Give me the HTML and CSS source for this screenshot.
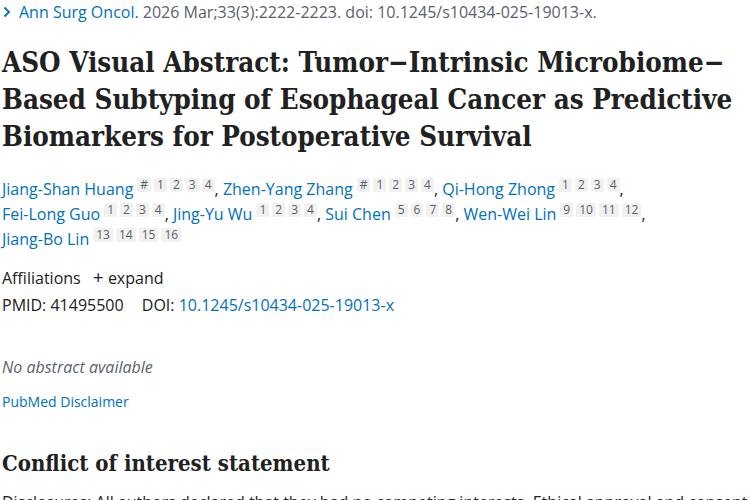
FILE: index.html
```html
<!DOCTYPE html>
<html>
<head>
<meta charset="utf-8">
<link rel="stylesheet" href="styles.css">
</head>
<body>
<main class="article">
  <div class="cite">
    <svg class="chev" width="8" height="12" viewBox="0 0 8 12"><path d="M1.5 1.5 L6 6 L1.5 10.5" fill="none" stroke="#0071bc" stroke-width="1.8"/></svg>
    <span><a class="link" href="#">Ann Surg Oncol.</a> 2026 Mar;33(3):2222-2223. doi: 10.1245/s10434-025-19013-x.</span>
  </div>
  <h1 class="title">ASO Visual Abstract: Tumor−<wbr>Intrinsic Microbiome−<wbr>Based Subtyping of Esophageal Cancer as Predictive Biomarkers for Postoperative Survival</h1>
  <div class="authors">
    <span class="author"><a class="link" href="#">Jiang-Shan Huang</a><sup class="refs"><span class="ref">#</span><span class="ref">1</span><span class="ref">2</span><span class="ref">3</span><span class="ref">4</span></sup>,</span>
    <span class="author"><a class="link" href="#">Zhen-Yang Zhang</a><sup class="refs"><span class="ref">#</span><span class="ref">1</span><span class="ref">2</span><span class="ref">3</span><span class="ref">4</span></sup>,</span>
    <span class="author"><a class="link" href="#">Qi-Hong Zhong</a><sup class="refs"><span class="ref">1</span><span class="ref">2</span><span class="ref">3</span><span class="ref">4</span></sup>,</span>
    <span class="author"><a class="link" href="#">Fei-Long Guo</a><sup class="refs"><span class="ref">1</span><span class="ref">2</span><span class="ref">3</span><span class="ref">4</span></sup>,</span>
    <span class="author"><a class="link" href="#">Jing-Yu Wu</a><sup class="refs"><span class="ref">1</span><span class="ref">2</span><span class="ref">3</span><span class="ref">4</span></sup>,</span>
    <span class="author"><a class="link" href="#">Sui Chen</a><sup class="refs"><span class="ref">5</span><span class="ref">6</span><span class="ref">7</span><span class="ref">8</span></sup>,</span>
    <span class="author"><a class="link" href="#">Wen-Wei Lin</a><sup class="refs"><span class="ref">9</span><span class="ref">10</span><span class="ref">11</span><span class="ref">12</span></sup>,</span>
    <span class="author"><a class="link" href="#">Jiang-Bo Lin</a><sup class="refs"><span class="ref">13</span><span class="ref">14</span><span class="ref">15</span><span class="ref">16</span></sup></span>
  </div>
  <div class="affil">Affiliations <span class="expand"><span class="plus">+</span> expand</span></div>
  <div class="ids">PMID: 41495500 <span class="doi">DOI: <a class="link" href="#">10.1245/s10434-025-19013-x</a></span></div>
  <p class="noabs">No abstract available</p>
  <a class="link disclaimer" href="#">PubMed Disclaimer</a>
  <h2 class="sect">Conflict of interest statement</h2>
  <p class="disc">Disclosures: All authors declared that they had no competing interests. Ethical approval and consent</p>
</main>
</body>
</html>
```
FILE: styles.css
```css
html, body {
  margin: 0;
  padding: 0;
  background: #fff;
}
body {
  font-family: "Open Sans", "Noto Sans", sans-serif;
  color: #212121;
  overflow: hidden;
  height: 500px;
}
.article {
  padding: 2px 0 0 2px;
}
.link {
  color: #0071bc;
  text-decoration: none;
}
.cite {
  font-size: 16px;
  line-height: 20px;
  color: #5b616b;
  display: flex;
  align-items: center;
  gap: 8px;
  white-space: nowrap;
}
.chev { flex: none; margin-left: 1px; }
.title {
  font-family: "DejaVu Serif", "Liberation Serif", serif;
  font-stretch: condensed;
  font-weight: 700;
  font-size: 27.5px;
  line-height: 37px;
  color: #212121;
  margin: 22px 0 0 0;
  max-width: 746px;
}
.authors {
  margin-top: 22px;
  font-size: 16px;
  line-height: 25px;
  color: #212121;
  max-width: 690px;
}
.author { white-space: nowrap; }
.refs {
  font-size: 12px;
  line-height: 12px;
  vertical-align: 6px;
  margin-left: 4px;
}
.ref {
  display: inline-block;
  background: #f1f1f1;
  color: #5b616b;
  padding: 1px 3px;
  margin-right: 3px;
  border-radius: 2px;
}
.ref:last-child { margin-right: 0; }
.affil {
  margin-top: 15px;
  font-size: 16px;
  line-height: 20px;
  color: #212121;
}
.expand { margin-left: 8px; color: #212121; }
.plus { font-size: 19px; }
.ids {
  margin-top: 7px;
  font-size: 16px;
  line-height: 20px;
}
.doi { margin-left: 14px; }
.noabs {
  margin: 42px 0 0 0;
  font-style: italic;
  color: #5b616b;
  font-size: 16px;
  line-height: 20px;
}
.disclaimer {
  display: block;
  margin-top: 15px;
  font-size: 14px;
  line-height: 20px;
}
.sect {
  font-family: "DejaVu Serif", "Liberation Serif", serif;
  font-stretch: condensed;
  font-weight: 700;
  font-size: 22px;
  line-height: 30px;
  margin: 36px 0 0 0;
  color: #212121;
}
.disc {
  margin: 14px 0 0 0;
  font-size: 16px;
  line-height: 20px;
  white-space: nowrap;
}
```
